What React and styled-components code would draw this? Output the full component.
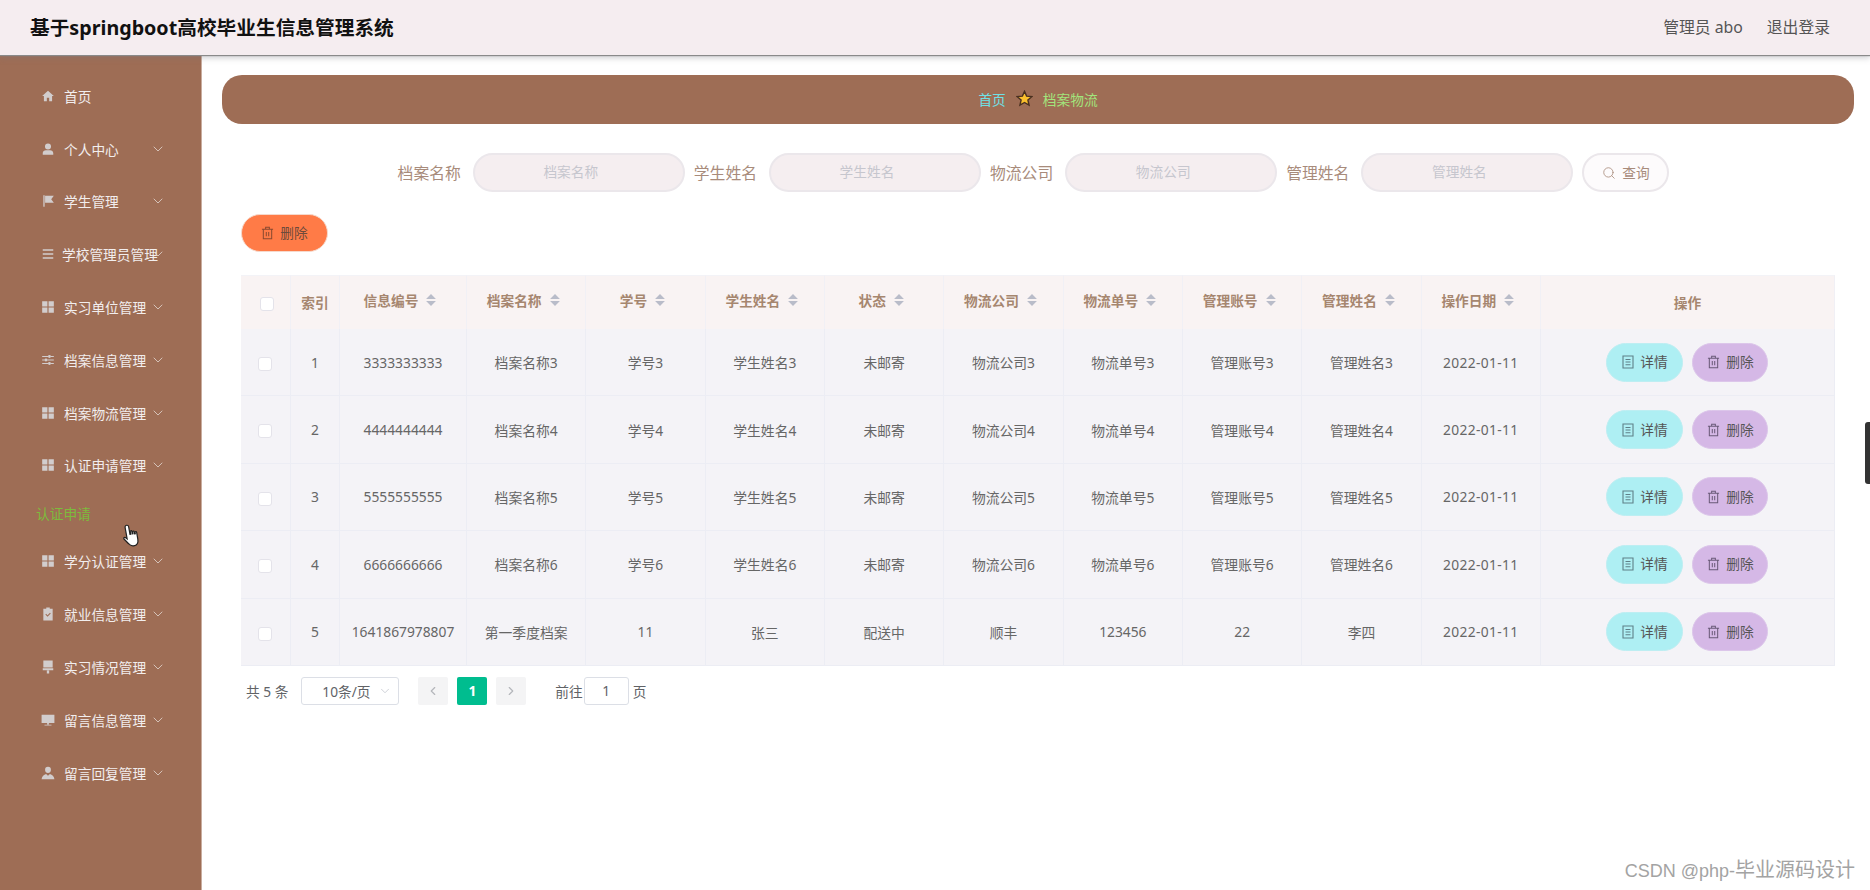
import React from 'react';
import styled, { createGlobalStyle } from 'styled-components';
import { Search, ChevronDown, ChevronLeft, ChevronRight } from 'lucide-react';

const FONT = `"Noto Sans", "Noto Sans CJK SC", sans-serif`;

const GlobalStyle = createGlobalStyle`
  html, body {
    margin: 0;
    padding: 0;
    height: 890px;
    overflow: hidden;
    background: #fff;
    font-family: ${FONT};
  }
  * { box-sizing: border-box; }
`;

const Page = styled.div`
  position: relative;
  width: 1870px;
  height: 890px;
  display: flex;
  flex-direction: column;
  overflow: hidden;
`;

const TopBar = styled.header`
  position: relative;
  z-index: 2;
  flex: 0 0 55px;
  display: flex;
  align-items: center;
  justify-content: space-between;
  padding: 0 40px 2px 30px;
  background: #f5edf0;
  box-shadow: 0 1px 1px #8a8a8a, 0 3px 6px rgba(120, 120, 130, 0.35);
`;

const Title = styled.h1`
  margin: 0;
  font-size: 19.7px;
  font-weight: 700;
  color: #111;
`;

const TopLinks = styled.div`
  display: flex;
  gap: 24px;
  font-size: 15.8px;
  color: #555;
`;

const Body = styled.div`
  flex: 1;
  display: flex;
  min-height: 0;
`;

const Aside = styled.aside`
  flex: 0 0 202px;
  padding-top: 14.4px;
  background: #9e6d55;
  border-right: 1px solid #c9ad9f;
`;

const MenuItem = styled.div`
  position: relative;
  height: 52.8px;
  display: flex;
  align-items: center;
  padding-left: 41px;
  font-size: 13.7px;
  color: #f2eeee;
  white-space: nowrap;
`;

const MenuIcon = styled.svg`
  flex: 0 0 14px;
  width: 14px;
  height: 14px;
  margin-right: ${p => (p.$tight ? '7px' : '9px')};
  fill: #d2cdcd;
`;

const Caret = styled(ChevronDown)`
  position: absolute;
  right: 35px;
  top: 50%;
  margin-top: -8px;
  color: #ddcfc9;
`;

const SubItem = styled.div`
  height: 43.2px;
  display: flex;
  align-items: center;
  padding-left: 36px;
  font-size: 13.7px;
  color: #7dbb3c;
`;

const Main = styled.main`
  flex: 1;
  min-width: 0;
  padding: 20px 16px 0 20px;
`;

const Crumbs = styled.nav`
  height: 49px;
  padding-bottom: 2px;
  display: flex;
  align-items: center;
  justify-content: center;
  gap: 10px;
  border-radius: 20px;
  background: #9e6d55;
  font-size: 13.7px;
`;

const CrumbLink = styled.span`
  color: ${p => p.$color};
`;

const Content = styled.div`
  padding: 0 19px;
`;

const SearchRow = styled.form`
  margin: 29px 0 22px;
  padding-right: 9px;
  display: flex;
  align-items: center;
  justify-content: center;
  gap: 9px;
`;

const Field = styled.label`
  display: flex;
  align-items: center;
  gap: 12px;
  font-size: 15.8px;
  color: #a88b7b;
`;

const SearchInput = styled.input`
  width: 212px;
  height: 39px;
  padding: 0 28px 2px 12px;
  border: 2px solid #ebe7eb;
  border-radius: 20px;
  background: #f5eef0;
  outline: none;
  text-align: center;
  font-family: ${FONT};
  font-size: 13.7px;
  &::placeholder { color: #c6c6ce; }
`;

const QueryButton = styled.button`
  width: 87px;
  height: 39px;
  display: flex;
  align-items: center;
  justify-content: center;
  gap: 6px;
  padding: 0 0 2px;
  border: 2px solid #ebe7eb;
  border-radius: 20px;
  background: #fdfbfc;
  font-family: ${FONT};
  font-size: 13.7px;
  color: #a88b7b;
  svg { margin-top: 2px; }
`;

const Pill = styled.button`
  width: ${p => p.$w || 76}px;
  height: ${p => p.$h || 39}px;
  display: inline-flex;
  align-items: center;
  justify-content: center;
  gap: 6px;
  padding: 0 0 2px;
  border: 1px solid ${p => p.$edge};
  border-radius: 20px;
  background: ${p => p.$bg};
  font-family: ${FONT};
  font-size: 13.7px;
  color: ${p => p.$color || '#555'};
  svg { margin-top: 2px; }
`;

const BulkBar = styled.div`
  margin: 0 0 23px 0;
  display: flex;
`;

const Table = styled.table`
  width: 1594px;
  table-layout: fixed;
  border-collapse: separate;
  border-spacing: 0;
`;

const Th = styled.th`
  height: 54px;
  padding: 0 0 1px;
  background: #f9f3f3;
  border-top: 1px solid #f3f3f7;
  border-right: 1px solid #f1f0f5;
  font-size: 13.7px;
  font-weight: 700;
  color: #a6866f;
  text-align: center;
`;

const Td = styled.td`
  height: 67.4px;
  padding: 0;
  background: #f4f3f7;
  border-bottom: 1px solid #ecedf4;
  border-right: 1px solid #ecedf4;
  font-size: 13.8px;
  letter-spacing: ${p => (p.$date ? '0.35px' : '0')};
  color: #666;
  text-align: center;
  white-space: nowrap;
`;

const Check = styled.span`
  display: inline-block;
  width: 14px;
  height: 14px;
  vertical-align: middle;
  border: 1px solid #e4e3ea;
  border-radius: 3px;
  background: #fff;
  margin-left: ${p => (p.$head ? '3px' : '-1px')};
`;

const SortLabel = styled.span`
  display: inline-flex;
  align-items: center;
  gap: 8px;
  margin-right: 6px;
  padding-bottom: 4px;
`;

const SortCaret = styled.svg`
  width: 10px;
  height: 12px;
  fill: #b9bcc9;
`;

const Actions = styled.div`
  display: flex;
  justify-content: center;
  gap: 9px;
`;

const Pager = styled.div`
  margin-top: 11px;
  padding-left: 5px;
  height: 28px;
  display: flex;
  align-items: center;
  font-size: 13.7px;
  color: #606266;
`;

const SizeSelect = styled.div`
  position: relative;
  width: 98px;
  height: 28px;
  margin: 0 19px 0 13px;
  padding-left: 20px;
  display: flex;
  align-items: center;
  border: 1px solid #dcdfe6;
  border-radius: 3px;
  background: #fff;
  svg {
    position: absolute;
    right: 6px;
    top: 6px;
    color: #c0c4cc;
  }
`;

const PageButton = styled.div`
  width: 30px;
  height: 28px;
  margin-right: 9px;
  display: flex;
  align-items: center;
  justify-content: center;
  border-radius: 2px;
  background: ${p => (p.$active ? '#00bd8f' : '#f4f4f5')};
  color: ${p => (p.$active ? '#fff' : '#b4b6bb')};
  font-weight: 700;
`;

const Jump = styled.div`
  margin-left: 20px;
  display: flex;
  align-items: center;
  gap: 1px;
`;

const JumpInput = styled.input`
  width: 45px;
  height: 28px;
  padding: 0;
  margin-right: 3px;
  border: 1px solid #dcdfe6;
  border-radius: 3px;
  outline: none;
  text-align: center;
  font-family: ${FONT};
  font-size: 13.7px;
  color: #606266;
`;

const SideTab = styled.div`
  position: absolute;
  right: 0;
  top: 422px;
  width: 5px;
  height: 62px;
  background: #333;
  border-radius: 3px 0 0 3px;
`;

const Watermark = styled.div`
  position: absolute;
  right: 15px;
  top: 855px;
  font-family: "Liberation Sans", "Noto Sans CJK SC", sans-serif;
  font-size: 18px;
  line-height: 30px;
  color: #a3a3a3;
  white-space: nowrap;
`;

const WatermarkCjk = styled.span`
  font-size: 20px;
`;

const HandCursor = styled.svg`
  position: absolute;
  left: 122px;
  top: 523px;
  width: 20px;
  height: 26px;
  transform: rotate(-10deg);
`;

const iconPaths = {
  home: 'M12 3 2 12h3v9h5v-6h4v6h5v-9h3z',
  user: 'M12 2.5a5.2 5.2 0 1 1 0 10.4 5.2 5.2 0 0 1 0-10.4zM3 22v-3c0-3 2.5-5 5.5-5h7c3 0 5.5 2 5.5 5v3z',
  flag: 'M4 2h2.2v20H4zM7 3h15l-4.5 6 4.5 6H7z',
  list: 'M3 4h18v2.4H3zM3 10.8h18v2.4H3zM3 17.6h18V20H3z',
  grid: 'M2 2h9v9H2zM13 2h9v9h-9zM2 13h9v9H2zM13 13h9v9h-9z',
  sliders: 'M2 5.2h10v1.6H2zM17 5.2h5v1.6h-5zM2 11.2h4v1.6H2zM11 11.2h11v1.6H11zM2 17.2h10v1.6H2zM17 17.2h5v1.6h-5zM14.5 3.5a2.5 2.5 0 1 1 0 5 2.5 2.5 0 0 1 0-5zM8.5 9.5a2.5 2.5 0 1 1 0 5 2.5 2.5 0 0 1 0-5zM14.5 15.5a2.5 2.5 0 1 1 0 5 2.5 2.5 0 0 1 0-5z',
  claim: 'M9 1h6v2h5v20H4V3h5zM7.5 13l1.3-1.3 2.4 2.4 4.2-4.2 1.3 1.3-5.5 5.6z',
  brush: 'M4 1h16v12H4zM3 14h18v3.5H3zM10 18h4v5h-4z',
  monitor: 'M1 3h22v14H1zM10.5 17h3v2.5h-3zM6 20h12v1.6H6z',
  custom: 'M12 1.5a5 5 0 0 1 5 5.2c0 2.8-2.2 5.3-5 5.3s-5-2.5-5-5.3a5 5 0 0 1 5-5.2zM1 22.5c.5-5 4-8 7.7-9l3.3 3 3.3-3c3.7 1 7.2 4 7.7 9z',
};

function SideIcon({ name, tight }) {
  return (
    <MenuIcon viewBox="0 0 24 24" $tight={tight}>
      <path fillRule="evenodd" d={iconPaths[name]} />
    </MenuIcon>
  );
}

function TrashIcon({ color }) {
  return (
    <svg width="13" height="14" viewBox="0 0 14 15" fill="none" stroke={color} strokeWidth="1.1">
      <path d="M1 3.5h12M5 3.5V1.2h4v2.3M2.5 3.5v10.3h9V3.5M5.7 6.5v4.5M8.3 6.5v4.5" />
    </svg>
  );
}

function DocIcon({ color }) {
  return (
    <svg width="12" height="14" viewBox="0 0 12 14" fill="none" stroke={color} strokeWidth="1.1">
      <path d="M1 1h10v12H1zM3.5 4.5h5M3.5 7h5M3.5 9.8h5" />
    </svg>
  );
}

const menu = [
  { label: '首页', icon: 'home', plain: true },
  { label: '个人中心', icon: 'user' },
  { label: '学生管理', icon: 'flag' },
  { label: '学校管理员管理', icon: 'list', tight: true },
  { label: '实习单位管理', icon: 'grid' },
  { label: '档案信息管理', icon: 'sliders' },
  { label: '档案物流管理', icon: 'grid' },
  { label: '认证申请管理', icon: 'grid', sub: '认证申请' },
  { label: '学分认证管理', icon: 'grid' },
  { label: '就业信息管理', icon: 'claim' },
  { label: '实习情况管理', icon: 'brush' },
  { label: '留言信息管理', icon: 'monitor' },
  { label: '留言回复管理', icon: 'custom' },
];

const filters = ['档案名称', '学生姓名', '物流公司', '管理姓名'];

const columns = ['信息编号', '档案名称', '学号', '学生姓名', '状态', '物流公司', '物流单号', '管理账号', '管理姓名', '操作日期'];

const makeRow = (n, code) => [
  code, `档案名称${n}`, `学号${n}`, `学生姓名${n}`, '未邮寄', `物流公司${n}`, `物流单号${n}`, `管理账号${n}`, `管理姓名${n}`, '2022-01-11',
];

const rows = [
  makeRow(3, '3333333333'),
  makeRow(4, '4444444444'),
  makeRow(5, '5555555555'),
  makeRow(6, '6666666666'),
  ['1641867978807', '第一季度档案', '11', '张三', '配送中', '顺丰', '123456', '22', '李四', '2022-01-11'],
];

export default function App() {
  return (
    <Page>
      <GlobalStyle />
      <TopBar>
        <Title>基于springboot高校毕业生信息管理系统</Title>
        <TopLinks>
          <span>管理员 abo</span>
          <span>退出登录</span>
        </TopLinks>
      </TopBar>
      <Body>
        <Aside>
          {menu.map(item => (
            <React.Fragment key={item.label}>
              <MenuItem>
                <SideIcon name={item.icon} tight={item.tight} />
                {item.label}
                {!item.plain && <Caret size={16} strokeWidth={1.3} />}
              </MenuItem>
              {item.sub && <SubItem>{item.sub}</SubItem>}
            </React.Fragment>
          ))}
        </Aside>
        <Main>
          <Crumbs>
            <CrumbLink $color="#6fe0e6">首页</CrumbLink>
            <svg width="17" height="17" viewBox="0 0 24 24">
              <path d="M12 2l3 6.6 7.2.8-5.4 4.8 1.6 7.1L12 17.6l-6.4 3.7 1.6-7.1L1.8 9.4 9 8.6z" fill="#fbc02d" stroke="#4a3020" strokeWidth="2" />
            </svg>
            <CrumbLink $color="#a2e57c">档案物流</CrumbLink>
          </Crumbs>
          <Content>
            <SearchRow>
              {filters.map(name => (
                <Field key={name}>
                  {name}
                  <SearchInput placeholder={name} />
                </Field>
              ))}
              <QueryButton type="button">
                <Search size={14} strokeWidth={1.4} />
                查询
              </QueryButton>
            </SearchRow>
            <BulkBar>
              <Pill type="button" $w={87} $h={38} $bg="#ff7b47" $edge="#f6d9cc" $color="#6d4a3b">
                <TrashIcon color="#8a4a30" />
                删除
              </Pill>
            </BulkBar>
            <Table>
              <colgroup>
                <col style={{ width: 50 }} />
                <col style={{ width: 49 }} />
                <col style={{ width: 127 }} />
                {columns.slice(1).map(c => <col key={c} style={{ width: 119.33 }} />)}
                <col style={{ width: 294 }} />
              </colgroup>
              <thead>
                <tr>
                  <Th><Check $head /></Th>
                  <Th>索引</Th>
                  {columns.map(c => (
                    <Th key={c}>
                      <SortLabel>
                        {c}
                        <SortCaret viewBox="0 0 9 11">
                          <path d="M4.5 0 9 4.5H0zM0 6.5h9L4.5 11z" />
                        </SortCaret>
                      </SortLabel>
                    </Th>
                  ))}
                  <Th>操作</Th>
                </tr>
              </thead>
              <tbody>
                {rows.map((row, i) => (
                  <tr key={row[0]}>
                    <Td><Check /></Td>
                    <Td>{i + 1}</Td>
                    {row.map((cell, j) => <Td key={j} $date={j === 9}>{cell}</Td>)}
                    <Td>
                      <Actions>
                        <Pill type="button" $w={77} $bg="#aeeff3" $edge="#bdeef2">
                          <DocIcon color="#5f8088" />
                          详情
                        </Pill>
                        <Pill type="button" $bg="#d5b8e6" $edge="#dcc6ea">
                          <TrashIcon color="#6a5a78" />
                          删除
                        </Pill>
                      </Actions>
                    </Td>
                  </tr>
                ))}
              </tbody>
            </Table>
            <Pager>
              共 5 条
              <SizeSelect>
                10条/页
                <ChevronDown size={14} strokeWidth={1.3} />
              </SizeSelect>
              <PageButton><ChevronLeft size={14} strokeWidth={2} /></PageButton>
              <PageButton $active>1</PageButton>
              <PageButton><ChevronRight size={14} strokeWidth={2} /></PageButton>
              <Jump>
                前往
                <JumpInput defaultValue="1" readOnly />
                页
              </Jump>
            </Pager>
          </Content>
        </Main>
      </Body>
      <HandCursor viewBox="0 0 20 26">
        <path
          d="M6.5 1.5c1 0 1.8.8 1.8 1.8V11h.7V8.3c0-.9 1.6-.9 1.6 0V11h.7V9c0-.9 1.6-.9 1.6 0v2.4h.7V10c0-.9 1.6-.9 1.6 0v7c0 3.5-2 6-5.3 6H10c-2.4 0-3.5-1-4.7-3L1.6 14.6c-.6-1 .6-2 1.6-1.2L4.7 15V3.3c0-1 .8-1.8 1.8-1.8z"
          fill="#fff"
          stroke="#222"
          strokeWidth="1.2"
        />
      </HandCursor>
      <SideTab />
      <Watermark>CSDN @php-<WatermarkCjk>毕业源码设计</WatermarkCjk></Watermark>
    </Page>
  );
}
